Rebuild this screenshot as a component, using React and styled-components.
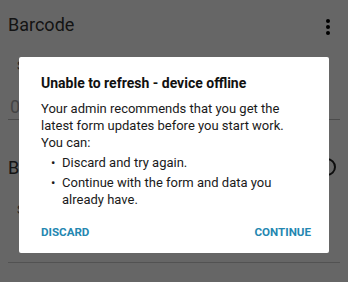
import React from 'react'
import styled, { createGlobalStyle } from 'styled-components'

const Global = createGlobalStyle`
  html, body { margin: 0; padding: 0; }
  body { width: 348px; height: 282px; overflow: hidden; font-family: Roboto, "Liberation Sans", sans-serif; }
`

const Screen = styled.div`
  position: relative;
  width: 348px;
  height: 282px;
  background: #ffffff;
  overflow: hidden;
`

const Toolbar = styled.div`
  height: 48px;
  display: flex;
  align-items: center;
  justify-content: space-between;
  padding: 0 18px 0 8px;
  font-size: 18px;
  color: #333;
`

const Dots = styled.div`
  display: flex;
  flex-direction: column;
  gap: 2px;
  margin-top: 5px;
  span { width: 4px; height: 4px; border-radius: 50%; background: #000; }
`

const Form = styled.div`
  padding: 8px 8px 0 8px;
`

const Hint = styled.div`
  font-size: 13px;
  line-height: 20px;
  color: #555;
  padding-left: 9px;
  height: ${p => p.$h}px;
`

const Field = styled.div`
  font-size: 18px;
  line-height: 22px;
  color: #aaa;
  padding: 0 0 1px 2px;
  border-bottom: 1px solid #bbb;
  margin-bottom: 33px;
`

const Label = styled.div`
  display: flex;
  justify-content: space-between;
  align-items: center;
  font-size: 18px;
  color: #333;
  height: 28px;
  margin-bottom: 19px;
`

const Radio = styled.span`
  width: 14px;
  height: 14px;
  border: 2px solid #222;
  border-radius: 50%;
  margin-right: 4px;
`

const Divider = styled.div`
  border-bottom: 1px solid #ccc;
`

const Scrim = styled.div`
  position: absolute;
  inset: 0;
  background: rgba(0, 0, 0, 0.6);
`

const Dialog = styled.div`
  position: absolute;
  left: 19px;
  top: 57px;
  width: 310px;
  height: 196px;
  box-sizing: border-box;
  background: #fff;
  border-radius: 2px;
  padding: 16px 22px 0 22px;
  color: #1a1a1a;
`

const Title = styled.div`
  font-size: 14px;
  font-weight: 700;
  line-height: 20px;
  color: #111;
`

const Body = styled.div`
  margin-top: 7px;
  font-size: 13px;
  line-height: 17px;
`

const List = styled.ul`
  list-style: none;
  margin: 3px 0 0 0;
  padding: 0;
  display: flex;
  flex-direction: column;
  gap: 3px;
`

const Item = styled.li`
  display: flex;
  &::before {
    content: '•';
    width: 21px;
    padding-left: 10px;
    box-sizing: border-box;
    flex: none;
  }
`

const Actions = styled.div`
  display: flex;
  justify-content: space-between;
  margin-top: 16px;
  margin-right: -4px;
`

const Action = styled.button`
  border: 0;
  background: none;
  padding: 0;
  font-family: inherit;
  font-size: 11.6px;
  font-weight: 700;
  color: #2487b1;
  line-height: 16px;
`

export default function App() {
  return (
    <Screen>
      <Global />
      <Toolbar>
        Barcode
        <Dots><span /><span /><span /></Dots>
      </Toolbar>
      <Form>
        <Hint $h={40}>Scan</Hint>
        <Field>0</Field>
        <Label>Barcode<Radio /></Label>
        <Hint $h={62}>Scan</Hint>
        <Divider />
      </Form>
      <Scrim />
      <Dialog>
        <Title>Unable to refresh - device offline</Title>
        <Body>
          Your admin recommends that you get the latest form updates before you start work. You can:
          <List>
            <Item>Discard and try again.</Item>
            <Item>Continue with the form and data you already have.</Item>
          </List>
        </Body>
        <Actions>
          <Action>DISCARD</Action>
          <Action>CONTINUE</Action>
        </Actions>
      </Dialog>
    </Screen>
  )
}
